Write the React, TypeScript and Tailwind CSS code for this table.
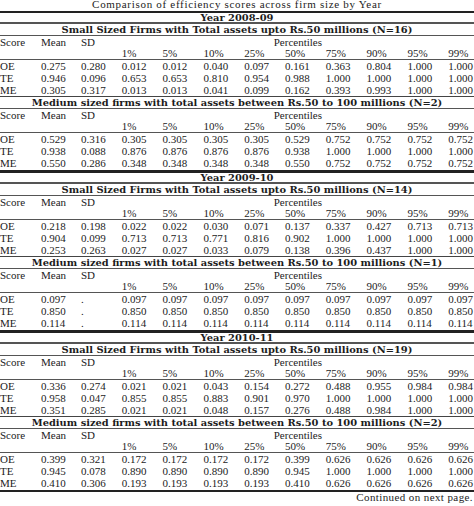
const cols = "grid grid-cols-[41px_40px_repeat(10,40.8px)]";
const bold = "font-['DejaVu_Serif',serif] text-[9.9px] font-bold";

type Row = [string, ...string[]];

type Section = { title: string; rows: Row[] };
type Year = { year: string; small: Section; medium: Section };

const pct = ["1%", "5%", "10%", "25%", "50%", "75%", "90%", "95%", "99%"];

const years: Year[] = [
  {
    year: "Year 2008-09",
    small: {
      title: "Small Sized Firms with Total assets upto Rs.50 millions (N=16)",
      rows: [
        ["OE", "0.275", "0.280", "0.012", "0.012", "0.040", "0.097", "0.161", "0.363", "0.804", "1.000", "1.000"],
        ["TE", "0.946", "0.096", "0.653", "0.653", "0.810", "0.954", "0.988", "1.000", "1.000", "1.000", "1.000"],
        ["ME", "0.305", "0.317", "0.013", "0.013", "0.041", "0.099", "0.162", "0.393", "0.993", "1.000", "1.000"],
      ],
    },
    medium: {
      title: "Medium sized firms with total assets between Rs.50 to 100 millions (N=2)",
      rows: [
        ["OE", "0.529", "0.316", "0.305", "0.305", "0.305", "0.305", "0.529", "0.752", "0.752", "0.752", "0.752"],
        ["TE", "0.938", "0.088", "0.876", "0.876", "0.876", "0.876", "0.938", "1.000", "1.000", "1.000", "1.000"],
        ["ME", "0.550", "0.286", "0.348", "0.348", "0.348", "0.348", "0.550", "0.752", "0.752", "0.752", "0.752"],
      ],
    },
  },
  {
    year: "Year 2009-10",
    small: {
      title: "Small Sized Firms with Total assets upto Rs.50 millions (N=14)",
      rows: [
        ["OE", "0.218", "0.198", "0.022", "0.022", "0.030", "0.071", "0.137", "0.337", "0.427", "0.713", "0.713"],
        ["TE", "0.904", "0.099", "0.713", "0.713", "0.771", "0.816", "0.902", "1.000", "1.000", "1.000", "1.000"],
        ["ME", "0.253", "0.263", "0.027", "0.027", "0.033", "0.079", "0.138", "0.396", "0.437", "1.000", "1.000"],
      ],
    },
    medium: {
      title: "Medium sized firms with total assets between Rs.50 to 100 millions (N=1)",
      rows: [
        ["OE", "0.097", ".", "0.097", "0.097", "0.097", "0.097", "0.097", "0.097", "0.097", "0.097", "0.097"],
        ["TE", "0.850", ".", "0.850", "0.850", "0.850", "0.850", "0.850", "0.850", "0.850", "0.850", "0.850"],
        ["ME", "0.114", ".", "0.114", "0.114", "0.114", "0.114", "0.114", "0.114", "0.114", "0.114", "0.114"],
      ],
    },
  },
  {
    year: "Year 2010-11",
    small: {
      title: "Small Sized Firms with Total assets upto Rs.50 millions (N=19)",
      rows: [
        ["OE", "0.336", "0.274", "0.021", "0.021", "0.043", "0.154", "0.272", "0.488", "0.955", "0.984", "0.984"],
        ["TE", "0.958", "0.047", "0.855", "0.855", "0.883", "0.901", "0.970", "1.000", "1.000", "1.000", "1.000"],
        ["ME", "0.351", "0.285", "0.021", "0.021", "0.048", "0.157", "0.276", "0.488", "0.984", "1.000", "1.000"],
      ],
    },
    medium: {
      title: "Medium sized firms with total assets between Rs.50 to 100 millions (N=2)",
      rows: [
        ["OE", "0.399", "0.321", "0.172", "0.172", "0.172", "0.172", "0.399", "0.626", "0.626", "0.626", "0.626"],
        ["TE", "0.945", "0.078", "0.890", "0.890", "0.890", "0.890", "0.945", "1.000", "1.000", "1.000", "1.000"],
        ["ME", "0.410", "0.306", "0.193", "0.193", "0.193", "0.193", "0.410", "0.626", "0.626", "0.626", "0.626"],
      ],
    },
  },
];

function Header() {
  return (
    <div className="h-[23px]">
      <div className={`${cols} h-[12px] items-center`}>
        <span>Score</span>
        <span>Mean</span>
        <span>SD</span>
        {/* table runs past the right edge, centre over the visible part */}
        <span className="col-span-9 pr-[15px] text-center">Percentiles</span>
      </div>
      <div className={`${cols} h-[11px] items-center`}>
        <span />
        <span />
        <span />
        {pct.map((p) => (
          <span key={p}>{p}</span>
        ))}
      </div>
    </div>
  );
}

function Data({ rows, tall }: { rows: Row[]; tall?: boolean }) {
  return (
    <div className={tall ? "h-[37px]" : "h-[36px]"}>
      {rows.map((r) => (
        <div key={r[0]} className={`${cols} h-[12px] items-center`}>
          {r.map((c, i) => (
            <span key={i}>{c}</span>
          ))}
        </div>
      ))}
    </div>
  );
}

function YearBlock({ y, first }: { y: Year; first: boolean }) {
  return (
    <div>
      <div className={first ? "h-[2px] bg-[#222]" : "h-[3px] bg-[#222]"} />
      <div className={`flex h-[9px] items-center justify-center whitespace-nowrap ${bold}`}>{y.year}</div>
      <div className="h-[2px] bg-[#555]" />
      <div className={`flex h-[11px] items-center justify-center whitespace-nowrap ${bold}`}>{y.small.title}</div>
      <div className="h-px bg-[#555]" />
      <Header />
      <div className="h-px bg-[#555]" />
      <Data rows={y.small.rows} />
      <div className="h-px bg-[#444]" />
      <div className={`flex h-[11px] items-center justify-center whitespace-nowrap ${bold}`}>{y.medium.title}</div>
      <div className="h-px bg-[#555]" />
      <Header />
      <div className="h-px bg-[#555]" />
      <Data rows={y.medium.rows} tall />
    </div>
  );
}

export default function App() {
  return (
    <div className="h-[506px] w-[474px] overflow-hidden bg-white font-['Liberation_Serif',serif] text-[11px] leading-none text-[#1c1c1c]">
      <div className="flex h-[11px] items-start justify-center whitespace-nowrap leading-[9px] tracking-[0.7px]">
        Comparison of efficiency scores across firm size by Year
      </div>
      {years.map((y, i) => (
        <YearBlock key={y.year} y={y} first={i === 0} />
      ))}
      <div className="h-[2px] bg-[#222]" />
      <div className="flex h-[11px] items-center justify-end whitespace-nowrap pr-px tracking-[0.4px]">
        Continued on next page.
      </div>
    </div>
  );
}
